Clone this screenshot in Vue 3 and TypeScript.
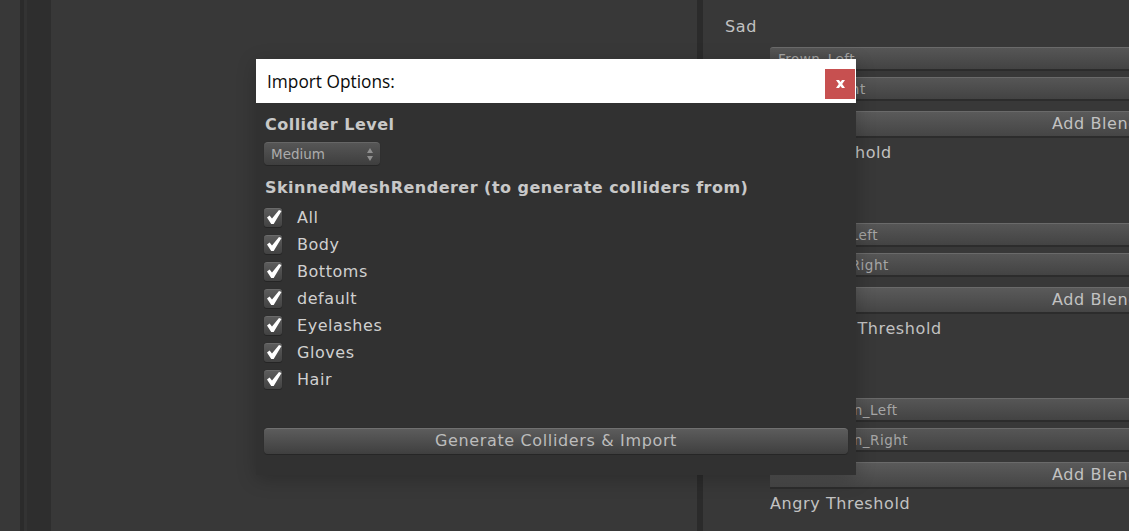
<script setup lang="ts">
interface Group { title: string; left: string; right: string; threshold: string }
const groups: Group[] = [
  { title: 'Sad', left: 'Frown_Left', right: 'Frown_Right', threshold: 'Sad Threshold' },
  { title: 'Surprised', left: 'BigFrown_Left', right: 'BigFrown_Right', threshold: 'Surprised Threshold' },
  { title: 'Angry', left: 'AngryFrown_Left', right: 'AngryFrown_Right', threshold: 'Angry Threshold' },
]
const meshes: string[] = ['All', 'Body', 'Bottoms', 'default', 'Eyelashes', 'Gloves', 'Hair']
</script>

<template>
  <div class="screen">
    <div class="strip s1"></div>
    <div class="strip s2"></div>
    <div class="strip s3"></div>
    <div class="strip s4"></div>
    <div class="center"></div>
    <div class="divider"></div>
    <div class="inspector">
      <section v-for="g in groups" :key="g.title" class="group">
        <div class="group-title">{{ g.title }}</div>
        <div class="indent">
          <div class="field">{{ g.left }}</div>
          <div class="field">{{ g.right }}</div>
          <div class="add-btn"><span>Add Blendshape</span></div>
          <div class="threshold">{{ g.threshold }}</div>
        </div>
      </section>
    </div>

    <div class="dialog">
      <header class="titlebar">
        <span class="title">Import Options:</span>
        <button class="close" aria-label="Close">
          <svg width="9" height="8" viewBox="0 0 9 8"><path d="M0 0h3l1.5 2L6 0h3L6.2 4 9 8H6L4.5 6 3 8H0l2.8-4z" fill="#fff"/></svg>
        </button>
      </header>
      <div class="body">
        <div class="heading">Collider Level</div>
        <div class="dropdown">
          <span>Medium</span>
          <svg width="6" height="13" viewBox="0 0 6 13"><path d="M3 0l3 5H0zM3 13L0 8h6z" fill="#8f8f8f"/></svg>
        </div>
        <div class="heading second">SkinnedMeshRenderer (to generate colliders from)</div>
        <ul class="checks">
          <li v-for="m in meshes" :key="m" class="check-row">
            <span class="box">
              <svg class="tick" width="18" height="18" viewBox="0 0 18 18"><path d="M3 9.5L5.6 7.4 8 10.6 15 2l2.5 1L9.7 16H7.2z" fill="#fff"/></svg>
            </span>
            <span class="label">{{ m }}</span>
          </li>
        </ul>
        <div class="generate">Generate Colliders &amp; Import</div>
      </div>
    </div>
  </div>
</template>

<style>
html, body { margin: 0; background: #383838; }
</style>

<style scoped>
.screen {
  position: relative;
  width: 1129px;
  height: 531px;
  overflow: hidden;
  display: flex;
  background: #383838;
  font-family: "DejaVu Sans", sans-serif;
  color: #c2c2c2;
}
.strip { flex: none; height: 100%; }
.s1 { width: 20px; background: #383838; }
.s2 { width: 4px; background: #2b2b2b; }
.s3 { width: 3px; background: #333333; }
.s4 { width: 24px; background: #2e2e2e; }
.center { flex: none; width: 646px; background: #383838; }
.divider { flex: none; width: 6px; background: #2b2b2b; }
.inspector {
  flex: 1;
  min-width: 0;
  padding: 16px 0 0 22px;
  background: #383838;
}
.group { height: 175.5px; }
.group-title { font-size: 16px; letter-spacing: 0.6px; line-height: 22px; height: 31px; }
.indent { margin-left: 45px; margin-right: -40px; }
.field {
  box-sizing: border-box;
  height: 24px;
  margin-bottom: 6px;
  padding-left: 8px;
  border-radius: 3px 3px 0 0;
  border-top: 1px solid #6a6a6a;
  border-bottom: 2px solid #2c2c2c;
  background: linear-gradient(#565656, #434343);
  font-size: 13.5px;
  letter-spacing: 0.5px;
  line-height: 22px;
  color: #a6a6a6;
}
.add-btn {
  box-sizing: border-box;
  height: 27px;
  margin-top: 10px;
  border-radius: 3px 3px 0 0;
  border-top: 1px solid #6a6a6a;
  border-bottom: 2px solid #2c2c2c;
  background: linear-gradient(#5a5a5a, #454545);
  font-size: 16px;
  letter-spacing: 0.6px;
  line-height: 24px;
  color: #c2c2c2;
  padding-left: 282px;
  white-space: nowrap;
  overflow: hidden;
}
.threshold { font-size: 16px; letter-spacing: 0.6px; line-height: 22px; margin-top: 4px; white-space: nowrap; }

.dialog {
  position: absolute;
  left: 256px;
  top: 59px;
  width: 600px;
  height: 416px;
  background: #313131;
  box-shadow: 0 4px 18px rgba(0, 0, 0, 0.22);
}
.titlebar {
  display: flex;
  align-items: center;
  justify-content: space-between;
  height: 44px;
  padding: 0 1px 0 11px;
  background: #fff;
}
.title { font-family: "Open Sans", sans-serif; font-size: 17.3px; color: #0b0b0b; }
.close {
  display: flex;
  align-items: center;
  justify-content: center;
  width: 30px;
  height: 30px;
  margin-top: 6px;
  padding: 0;
  border: 0;
  background: #c75050;
}
.body { padding: 11px 8px 0 8px; }
.heading {
  margin-left: 1px;
  font-size: 16px;
  font-weight: 700;
  letter-spacing: 0.48px;
  line-height: 22px;
  color: #c8c8c8;
}
.second { margin-top: 12px; }
.dropdown {
  box-sizing: border-box;
  display: flex;
  align-items: center;
  justify-content: space-between;
  width: 116px;
  height: 23px;
  margin-top: 6px;
  padding: 0 7px 0 7px;
  border-radius: 4px;
  border-top: 1px solid #666;
  box-shadow: 0 1px 0 #262626, 0 0 1px #222;
  background: linear-gradient(#565656, #3e3e3e);
  font-size: 13.5px;
  color: #acacac;
}
.checks { list-style: none; margin: 5px 0 0; padding: 0; }
.check-row { display: flex; align-items: center; height: 27px; }
.box {
  box-sizing: border-box;
  flex: none;
  position: relative;
  width: 18px;
  height: 19px;
  border-radius: 3px;
  border-top: 1px solid #6a6a6a;
  box-shadow: 0 1px 0 #252525, 0 0 1px #222;
  background: linear-gradient(#5c5c5c, #424242);
}
.tick { position: absolute; left: 0; top: -1px; }
.label { margin-left: 15px; font-size: 16px; letter-spacing: 0.55px; color: #d0d0d0; }
.generate {
  box-sizing: border-box;
  height: 26px;
  margin-top: 35px;
  border-radius: 4px;
  border-top: 1px solid #707070;
  box-shadow: 0 1px 0 #262626, 0 0 1px #222;
  background: linear-gradient(#5c5c5c, #3f3f3f);
  text-align: center;
  font-size: 16px;
  letter-spacing: 0.64px;
  line-height: 24px;
  color: #bcbcbc;
}
</style>
